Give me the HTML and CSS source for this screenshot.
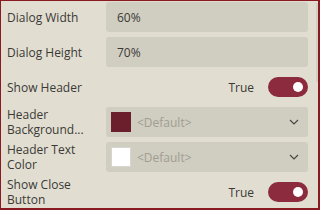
FILE: index.html
```html
<!DOCTYPE html>
<html lang="en">
<head>
    <meta charset="UTF-8">
    <title>Dialog Properties</title>
    <link rel="stylesheet" href="styles.css">
</head>
<body>
    <div class="panel">
        <div class="props">
            <div class="row">
                <div class="label">Dialog Width</div>
                <div class="field">60%</div>
            </div>
            <div class="row">
                <div class="label">Dialog Height</div>
                <div class="field">70%</div>
            </div>
            <div class="row">
                <div class="label">Show Header</div>
                <div class="bool">
                    <span class="bool-text">True</span>
                    <div class="toggle"><div class="knob"></div></div>
                </div>
            </div>
            <div class="row">
                <div class="label" title="Header Background Color">Header Background...</div>
                <div class="field color-field">
                    <div class="swatch dark"></div>
                    <span class="placeholder">&lt;Default&gt;</span>
                    <svg class="chevron" width="10" height="6" viewBox="0 0 10 6"><path d="M1 1 L5 5 L9 1" fill="none" stroke="#4a4742" stroke-width="1.2"/></svg>
                </div>
            </div>
            <div class="row">
                <div class="label">Header Text Color</div>
                <div class="field color-field">
                    <div class="swatch white"></div>
                    <span class="placeholder">&lt;Default&gt;</span>
                    <svg class="chevron" width="10" height="6" viewBox="0 0 10 6"><path d="M1 1 L5 5 L9 1" fill="none" stroke="#4a4742" stroke-width="1.2"/></svg>
                </div>
            </div>
            <div class="row">
                <div class="label">Show Close Button</div>
                <div class="bool">
                    <span class="bool-text">True</span>
                    <div class="toggle"><div class="knob"></div></div>
                </div>
            </div>
        </div>
        <!-- scrollbar thumb -->
        <div class="thumb"></div>
    </div>
</body>
</html>
```

FILE: styles.css
```css
body {
    margin: 0;
    font-family: "Open Sans", "Liberation Sans", sans-serif;
    font-size: 12px;
    color: #3b3936;
}

.panel {
    position: relative;
    width: 317px;
    height: 207px;
    background-color: #e1ded1;
    border-top: 1px solid #8a1a22;
    border-left: 1px solid #8a1a22;
    border-right: 2px solid #8a1a22;
    border-bottom: 2px solid #8a1a22;
    overflow: hidden;
}

.props {
    display: flex;
    flex-direction: column;
    gap: 5px;
    padding: 1px 10px 0 6px;
}

.row {
    display: flex;
    align-items: center;
    height: 30px;
}

.label {
    width: 92px;
    margin-right: 7px;
    line-height: 15px;
}

.field {
    flex: 1;
    height: 30px;
    background-color: #d0cdc1;
    border-radius: 3px;
    display: flex;
    align-items: center;
    padding-left: 11px;
    box-sizing: border-box;
}

.color-field {
    padding-left: 5px;
    padding-right: 9px;
}

.swatch {
    width: 20px;
    height: 20px;
    box-sizing: border-box;
    margin-right: 6px;
}

.swatch.dark {
    background-color: #6b1f2d;
}

.swatch.white {
    background-color: #ffffff;
    border: 1px solid #d8d6d0;
}

.placeholder {
    color: #a09d93;
    flex: 1;
}

.chevron {
    display: block;
}

.bool {
    flex: 1;
    display: flex;
    justify-content: flex-end;
    align-items: center;
}

.bool-text {
    margin-right: 14px;
}

.toggle {
    width: 40px;
    height: 20px;
    border-radius: 10px;
    background-color: #8d2b3e;
    display: flex;
    align-items: center;
    justify-content: flex-end;
    padding-right: 5px;
    box-sizing: border-box;
}

.knob {
    width: 10px;
    height: 10px;
    border-radius: 50%;
    background-color: #ffffff;
}

.thumb {
    position: absolute;
    top: 2px;
    right: 0;
    width: 2px;
    height: 79px;
    background-color: #d2cfc3;
}
```
